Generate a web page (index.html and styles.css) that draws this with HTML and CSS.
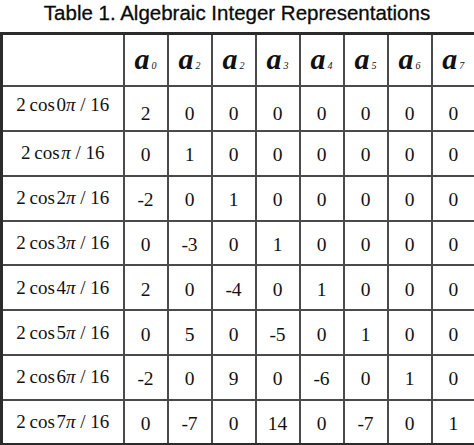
FILE: index.html
```html
<!DOCTYPE html>
<html>
<head>
<meta charset="utf-8">
<link rel="stylesheet" href="styles.css">
</head>
<body>
<div class="page">
  <h1 class="title">Table 1. Algebraic Integer Representations</h1>
  <table class="grid">
    <colgroup>
      <col class="c-first">
      <col class="c-num"><col class="c-num"><col class="c-num"><col class="c-num">
      <col class="c-num"><col class="c-num"><col class="c-num"><col class="c-num">
    </colgroup>
    <thead>
      <tr class="head">
        <th></th>
        <th><i>a</i><sub>0</sub></th>
        <th><i>a</i><sub>2</sub></th>
        <th><i>a</i><sub>2</sub></th>
        <th><i>a</i><sub>3</sub></th>
        <th><i>a</i><sub>4</sub></th>
        <th><i>a</i><sub>5</sub></th>
        <th><i>a</i><sub>6</sub></th>
        <th><i>a</i><sub>7</sub></th>
      </tr>
    </thead>
    <tbody>
      <tr class="first-row"><td class="lbl">2&thinsp;cos&#8202;0<i>π</i> / 16</td><td>2</td><td>0</td><td>0</td><td>0</td><td>0</td><td>0</td><td>0</td><td>0</td></tr>
      <tr><td class="lbl">2&thinsp;cos&#8202;<i>π</i> / 16</td><td>0</td><td>1</td><td>0</td><td>0</td><td>0</td><td>0</td><td>0</td><td>0</td></tr>
      <tr><td class="lbl">2&thinsp;cos&#8202;2<i>π</i> / 16</td><td>-2</td><td>0</td><td>1</td><td>0</td><td>0</td><td>0</td><td>0</td><td>0</td></tr>
      <tr><td class="lbl">2&thinsp;cos&#8202;3<i>π</i> / 16</td><td>0</td><td>-3</td><td>0</td><td>1</td><td>0</td><td>0</td><td>0</td><td>0</td></tr>
      <tr><td class="lbl">2&thinsp;cos&#8202;4<i>π</i> / 16</td><td>2</td><td>0</td><td>-4</td><td>0</td><td>1</td><td>0</td><td>0</td><td>0</td></tr>
      <tr><td class="lbl">2&thinsp;cos&#8202;5<i>π</i> / 16</td><td>0</td><td>5</td><td>0</td><td>-5</td><td>0</td><td>1</td><td>0</td><td>0</td></tr>
      <tr><td class="lbl">2&thinsp;cos&#8202;6<i>π</i> / 16</td><td>-2</td><td>0</td><td>9</td><td>0</td><td>-6</td><td>0</td><td>1</td><td>0</td></tr>
      <tr><td class="lbl">2&thinsp;cos&#8202;7<i>π</i> / 16</td><td>0</td><td>-7</td><td>0</td><td>14</td><td>0</td><td>-7</td><td>0</td><td>1</td></tr>
    </tbody>
  </table>
</div>
</body>
</html>
```

FILE: styles.css
```css
html, body {
  margin: 0;
  padding: 0;
  background: #ffffff;
}

.page {
  width: 474px;
  height: 445px;
  overflow: hidden;
}

.title {
  margin: 0;
  height: 32px;
  font-family: "Liberation Sans", Arial, sans-serif;
  font-weight: normal;
  font-size: 20.5px;
  line-height: 25px;
  text-align: center;
  color: #0a0a0a;
  -webkit-text-stroke: 0.3px #0a0a0a;
}

.grid {
  width: 474px;
  border-collapse: collapse;
  table-layout: fixed;
  border: 3px solid #2b2b2b;
  font-family: "Liberation Serif", "Times New Roman", serif;
  color: #111;
}

.c-first { width: 122px; }
.c-num { width: 44px; }

.grid th,
.grid td {
  border: 2px solid #4a4a4a;
  padding: 0;
  text-align: center;
}

.head th {
  height: 43px;
  vertical-align: bottom;
  padding-bottom: 7px;
  font-size: 30px;
  font-weight: bold;
  line-height: 24px;
  white-space: nowrap;
}

.head th i {
  font-style: italic;
  font-weight: bold;
}

.head th sub {
  font-size: 10px;
  font-style: italic;
  font-weight: normal;
  vertical-align: baseline;
  margin-left: 2px;
}

.grid thead {
  border-bottom: 2px solid #2b2b2b;
}

.grid td {
  height: 44.85px;
  font-size: 19.5px;
  vertical-align: middle;
  padding-top: 4px;
  box-sizing: border-box;
}

.grid td.lbl {
  font-size: 19px;
  padding-top: 0;
  white-space: nowrap;
}

.first-row td {
  padding-top: 12px;
}

.first-row td.lbl {
  padding-top: 0;
  padding-bottom: 6px;
}
```
